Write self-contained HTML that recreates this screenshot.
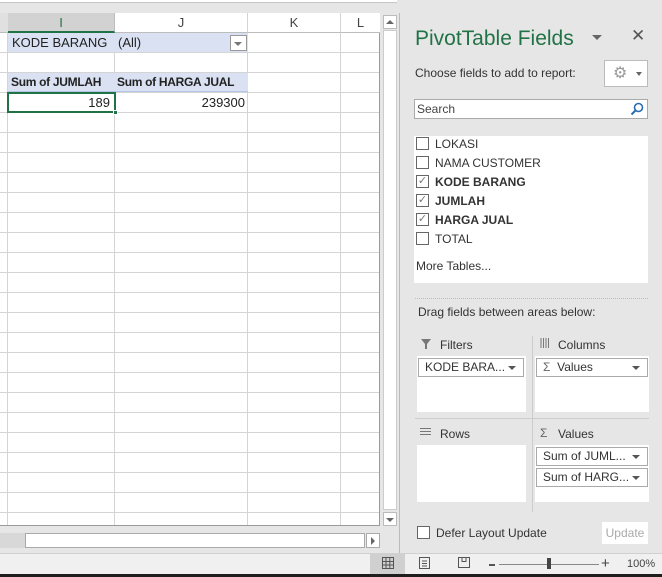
<!DOCTYPE html>
<html><head><style>
*{margin:0;padding:0;box-sizing:border-box}
body{width:662px;height:577px;overflow:hidden;background:#e6e6e6;font-family:"Liberation Sans",Arial,sans-serif;font-size:12px;position:relative;color:#222}
.a{position:absolute;white-space:nowrap}
.grid{left:0;top:33px;width:380px;height:493px;background:#fff;
background-image:linear-gradient(to right,transparent 7px,#d4d4d4 7px,#d4d4d4 8px,transparent 8px,transparent 114px,#d4d4d4 114px,#d4d4d4 115px,transparent 115px,transparent 247px,#d4d4d4 247px,#d4d4d4 248px,transparent 248px,transparent 340px,#d4d4d4 340px,#d4d4d4 341px,transparent 341px),repeating-linear-gradient(to bottom,transparent 0,transparent 19px,#d4d4d4 19px,#d4d4d4 20px);border-bottom:1px solid #9a9a9a;border-right:1px solid #9a9a9a}
.hdr{top:13px;height:20px;background:#fff;border-bottom:1px solid #bdbdbd;text-align:center;font-size:13px;line-height:19px;color:#444}
.cb{width:13px;height:13px;border:1px solid #666;background:#fff}
.fld{font-size:12px;color:#333;left:435px}
.box{background:#fff}
.pill{background:#fff;border:1px solid #aaa;height:19px;font-size:12px;line-height:17px;padding-left:6px;color:#333}
.tri{position:absolute;right:7px;top:7px;width:0;height:0;border-left:4px solid transparent;border-right:4px solid transparent;border-top:4px solid #555}
</style></head><body>
<div class="a" style="left:0;top:0;width:397px;height:3px;background:#fff;border-bottom:1px solid #c6c6c6"></div>
<div class="a hdr" style="left:0;width:8px;background:#e0e0e0"></div>
<div class="a hdr" style="left:8px;width:107px;background:#d2d2d2;border-bottom:2px solid #217346;border-right:1px solid #bdbdbd;color:#217346">I</div>
<div class="a hdr" style="left:115px;width:133px;border-right:1px solid #d4d4d4">J</div>
<div class="a hdr" style="left:248px;width:93px;border-right:1px solid #d4d4d4">K</div>
<div class="a hdr" style="left:341px;width:39px">L</div>
<div class="a grid"></div>
<div class="a" style="left:8px;top:33px;width:240px;height:19px;background:#d9e1f2;font-size:13px;line-height:19px"><span style="position:absolute;left:4px">KODE BARANG</span><span style="position:absolute;left:110px">(All)</span></div>
<div class="a" style="left:230px;top:35px;width:17px;height:16px;background:#fff;border:1px solid #999"><div class="tri" style="right:4px;top:6px;border-top-color:#777"></div></div>
<div class="a" style="left:8px;top:73px;width:240px;height:19px;background:#d9e1f2;font-weight:bold;font-size:12px;line-height:19px;border-bottom:1px solid #b4c6e7;letter-spacing:-0.3px"><span style="position:absolute;left:3px">Sum of JUMLAH</span><span style="position:absolute;left:109px">Sum of HARGA JUAL</span></div>
<div class="a" style="left:7px;top:92px;width:109px;height:21px;border:2px solid #217346;background:#fff;text-align:right;padding-right:4px;font-size:13px;line-height:17px">189</div>
<div class="a" style="left:113px;top:110px;width:5px;height:5px;background:#217346;border:1px solid #fff"></div>
<div class="a" style="left:115px;top:93px;width:130px;text-align:right;font-size:13px;line-height:19px">239300</div>
<!-- v scroll -->
<div class="a" style="left:381px;top:13px;width:17px;height:514px;background:#e6e6e6"></div>
<div class="a" style="left:383px;top:15px;width:14px;height:14px;background:#fff;border:1px solid #bbb"></div>
<div class="a" style="left:386px;top:20px;border-left:4px solid transparent;border-right:4px solid transparent;border-bottom:4px solid #666"></div>
<div class="a" style="left:383px;top:30px;width:14px;height:480px;background:#fff;border:1px solid #ccc"></div>
<div class="a" style="left:383px;top:512px;width:14px;height:14px;background:#fff;border:1px solid #bbb"></div>
<div class="a" style="left:386px;top:518px;border-left:4px solid transparent;border-right:4px solid transparent;border-top:4px solid #666"></div>
<!-- h scroll -->
<div class="a" style="left:0;top:533px;width:25px;height:15px;background:#d8d8d8"></div>
<div class="a" style="left:25px;top:533px;width:340px;height:15px;background:#fff;border:1px solid #aaa"></div>
<div class="a" style="left:366px;top:533px;width:14px;height:15px;background:#fff;border:1px solid #aaa"></div>
<div class="a" style="left:371px;top:537px;border-top:4px solid transparent;border-bottom:4px solid transparent;border-left:4px solid #666"></div>
<!-- status -->
<div class="a" style="left:0;top:553px;width:662px;height:21px;background:#f0f0f0;border-top:1px solid #d0d0d0"></div>
<div class="a" style="left:370px;top:553px;width:35px;height:21px;background:#d0d0d0"></div>
<svg class="a" style="left:380px;top:556px" width="15" height="15"><g fill="none" stroke="#555"><rect x="2.5" y="1.5" width="11" height="11"/><path d="M2.5 5.5h11M2.5 9h11M6 1.5v11M9.8 1.5v11"/></g></svg>
<svg class="a" style="left:417px;top:556px" width="15" height="15"><g fill="none" stroke="#555"><rect x="2.5" y="1.5" width="10" height="11"/><path d="M5 5h5M5 7.5h5M5 10h5"/></g></svg>
<svg class="a" style="left:457px;top:556px" width="15" height="15"><g fill="none" stroke="#555"><path d="M1.5 1.5h11v10h-11zM5 1.5v4h4v-4"/></g></svg>
<div class="a" style="left:489px;top:564px;width:6px;height:2px;background:#555"></div>
<div class="a" style="left:499px;top:564px;width:100px;height:1px;background:#888"></div>
<div class="a" style="left:547px;top:558px;width:4px;height:11px;background:#444"></div>
<div class="a" style="left:601px;top:558px;font-size:15px;line-height:12px;color:#444">+</div>
<div class="a" style="left:627px;top:558px;font-size:11px;color:#444">100%</div>
<div class="a" style="left:0;top:574px;width:662px;height:3px;background:#1e1e1e"></div>
<!-- panel -->
<div class="a" style="left:399px;top:13px;width:1px;height:540px;background:#bbb"></div>
<div class="a" style="left:415px;top:27px;font-size:21px;color:#217346">PivotTable Fields</div>
<div class="a" style="left:592px;top:35px;border-left:5px solid transparent;border-right:5px solid transparent;border-top:5px solid #666"></div>
<div class="a" style="left:631px;top:26px;font-size:17px;color:#555">✕</div>
<div class="a" style="left:415px;top:66px;font-size:12px;color:#333">Choose fields to add to report:</div>
<div class="a" style="left:604px;top:60px;width:44px;height:27px;background:#fff;border:1px solid #bbb"></div>
<div class="a" style="left:613px;top:63px;font-size:16px;color:#999">⚙</div>
<div class="a" style="left:636px;top:72px;border-left:3px solid transparent;border-right:3px solid transparent;border-top:4px solid #666"></div>
<div class="a" style="left:414px;top:99px;width:234px;height:20px;background:#fff;border:1px solid #aaa;font-size:12px;line-height:18px;padding-left:2px;color:#444">Search</div>
<svg class="a" style="left:630px;top:102px" width="14" height="14"><circle cx="8.5" cy="5.5" r="4" fill="none" stroke="#2b6bb3" stroke-width="1.6"/><path d="M5.5 8.5L1.5 12.5" stroke="#2b6bb3" stroke-width="2"/></svg>
<div class="a box" style="left:414px;top:136px;width:234px;height:147px"></div>
<div class="a cb" style="left:416px;top:137px"></div><div class="a fld" style="top:137px">LOKASI</div>
<div class="a cb" style="left:416px;top:156px"></div><div class="a fld" style="top:156px">NAMA CUSTOMER</div>
<div class="a cb" style="left:416px;top:175px;color:#777;font-size:11px;line-height:11px;text-align:center">✓</div><div class="a fld" style="top:175px;font-weight:bold">KODE BARANG</div>
<div class="a cb" style="left:416px;top:194px;color:#777;font-size:11px;line-height:11px;text-align:center">✓</div><div class="a fld" style="top:194px;font-weight:bold">JUMLAH</div>
<div class="a cb" style="left:416px;top:213px;color:#777;font-size:11px;line-height:11px;text-align:center">✓</div><div class="a fld" style="top:213px;font-weight:bold">HARGA JUAL</div>
<div class="a cb" style="left:416px;top:232px"></div><div class="a fld" style="top:232px">TOTAL</div>
<div class="a" style="left:416px;top:259px;color:#333">More Tables...</div>
<div class="a" style="left:415px;top:298px;width:233px;border-top:1px dotted #bbb"></div>
<div class="a" style="left:418px;top:305px;color:#333">Drag fields between areas below:</div>
<svg class="a" style="left:421px;top:339px" width="10" height="10"><path d="M0 0h10L6 5v5H4V5z" fill="#777"/></svg>
<div class="a" style="left:440px;top:338px;color:#333">Filters</div>
<svg class="a" style="left:540px;top:338px" width="10" height="10"><path d="M1 0v10M3.5 0v10M6 0v10M8.5 0v10" stroke="#777"/></svg>
<div class="a" style="left:558px;top:338px;color:#333">Columns</div>
<div class="a box" style="left:417px;top:356px;width:109px;height:56px"></div>
<div class="a box" style="left:535px;top:356px;width:114px;height:56px"></div>
<div class="a" style="left:532px;top:336px;width:1px;height:176px;background:#ccc"></div>
<div class="a" style="left:415px;top:418px;width:234px;height:1px;background:#ccc"></div>
<div class="a pill" style="left:418px;top:358px;width:106px">KODE BARA...<div class="tri"></div></div>
<div class="a pill" style="left:536px;top:358px;width:112px"><span style="color:#666">Σ</span>&nbsp; Values<div class="tri"></div></div>
<div class="a" style="left:420px;top:428px;width:11px;height:7px;border-top:1px solid #777;border-bottom:1px solid #777"><div style="margin-top:2px;border-top:1px solid #777"></div></div>
<div class="a" style="left:440px;top:427px;color:#333">Rows</div>
<div class="a" style="left:540px;top:426px;color:#666">Σ</div>
<div class="a" style="left:558px;top:427px;color:#333">Values</div>
<div class="a box" style="left:417px;top:445px;width:109px;height:57px"></div>
<div class="a box" style="left:535px;top:445px;width:114px;height:57px"></div>
<div class="a pill" style="left:536px;top:447px;width:112px">Sum of JUML...<div class="tri"></div></div>
<div class="a pill" style="left:536px;top:468px;width:112px">Sum of HARG...<div class="tri"></div></div>
<div class="a cb" style="left:417px;top:526px"></div>
<div class="a" style="left:436px;top:526px;color:#333">Defer Layout Update</div>
<div class="a" style="left:602px;top:522px;width:46px;height:22px;background:#fff;color:#aaa;text-align:center;line-height:22px">Update</div>
</body></html>
